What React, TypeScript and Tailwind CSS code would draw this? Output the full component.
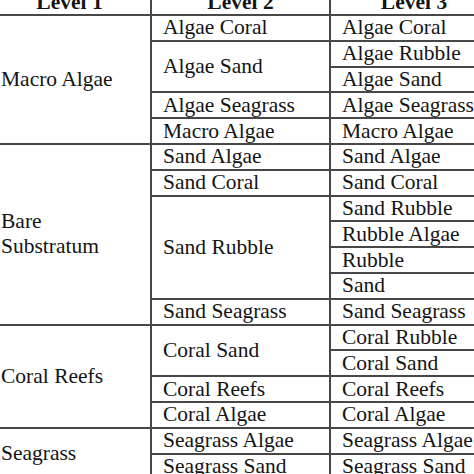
import React from "react";

type Cell = { text: string; col: 1 | 2 | 3; span?: number; header?: boolean };

const spanClass: Record<number, string> = {
  1: "row-span-1",
  2: "row-span-2",
  4: "row-span-4",
  5: "row-span-5",
  7: "row-span-7",
};

const colClass: Record<number, string> = {
  1: "col-start-1",
  2: "col-start-2",
  3: "col-start-3",
};

const padClass: Record<number, string> = {
  1: "pl-[12px]",
  2: "pl-[11px]",
  3: "pl-[11px]",
};

const cells: Cell[] = [
  { text: "Level 1", col: 1, header: true },
  { text: "Level 2", col: 2, header: true },
  { text: "Level 3", col: 3, header: true },

  { text: "Macro Algae", col: 1, span: 5 },
  { text: "Algae Coral", col: 2 },
  { text: "Algae Coral", col: 3 },
  { text: "Algae Sand", col: 2, span: 2 },
  { text: "Algae Rubble", col: 3 },
  { text: "Algae Sand", col: 3 },
  { text: "Algae Seagrass", col: 2 },
  { text: "Algae Seagrass", col: 3 },
  { text: "Macro Algae", col: 2 },
  { text: "Macro Algae", col: 3 },

  { text: "Bare\nSubstratum", col: 1, span: 7 },
  { text: "Sand Algae", col: 2 },
  { text: "Sand Algae", col: 3 },
  { text: "Sand Coral", col: 2 },
  { text: "Sand Coral", col: 3 },
  { text: "Sand Rubble", col: 2, span: 4 },
  { text: "Sand Rubble", col: 3 },
  { text: "Rubble Algae", col: 3 },
  { text: "Rubble", col: 3 },
  { text: "Sand", col: 3 },
  { text: "Sand Seagrass", col: 2 },
  { text: "Sand Seagrass", col: 3 },

  { text: "Coral Reefs", col: 1, span: 4 },
  { text: "Coral Sand", col: 2, span: 2 },
  { text: "Coral Rubble", col: 3 },
  { text: "Coral Sand", col: 3 },
  { text: "Coral Reefs", col: 2 },
  { text: "Coral Reefs", col: 3 },
  { text: "Coral Algae", col: 2 },
  { text: "Coral Algae", col: 3 },

  { text: "Seagrass", col: 1, span: 2 },
  { text: "Seagrass Algae", col: 2 },
  { text: "Seagrass Algae", col: 3 },
  { text: "Seagrass Sand", col: 2 },
  { text: "Seagrass Sand", col: 3 },
];

export default function App() {
  return (
    <div className="w-[474px] h-[474px] overflow-hidden bg-white">
      <div
        className="-mt-[10px] -ml-[11px] grid grid-cols-[163px_179px_168px] grid-rows-[26px_repeat(18,25.8px)] text-[21.5px] text-[#141414]"
        style={{ fontFamily: '"Liberation Serif", "Times New Roman", serif' }}
      >
        {cells.map((c, i) => (
          <div
            key={i}
            className={`flex items-center whitespace-pre leading-[25px] border-r-2 border-b-2 border-[#474747] ${spanClass[c.span ?? 1]} ${colClass[c.col]} ${
              c.header ? "justify-center font-bold" : padClass[c.col]
            }`}
          >
            {c.text}
          </div>
        ))}
      </div>
    </div>
  );
}
